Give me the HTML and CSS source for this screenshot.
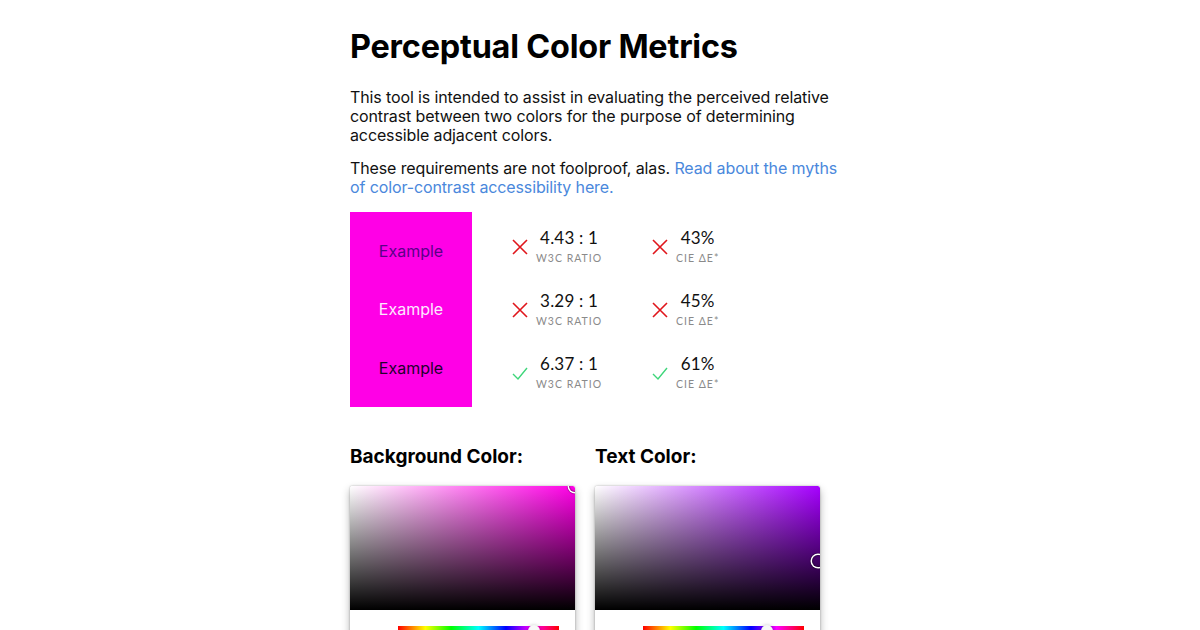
FILE: index.html
```html
<!DOCTYPE html>
<html lang="en">
<head>
<meta charset="utf-8">
<title>Perceptual Color Metrics</title>
<link rel="stylesheet" href="styles.css">
</head>
<body>
<main class="page">
  <h1 class="title">Perceptual Color Metrics</h1>
  <p class="lead">This tool is intended to assist in evaluating the perceived relative contrast between two colors for the purpose of determining accessible adjacent colors.</p>
  <p class="lead">These requirements are not foolproof, alas. <a class="link" href="#">Read about the myths of color-contrast accessibility here.</a></p>

  <section class="demo">
    <div class="examples">
      <div class="example ex-text">Example</div>
      <div class="example ex-white">Example</div>
      <div class="example ex-black">Example</div>
    </div>
    <div class="metrics">
      <div class="metric">
        <svg class="icon" viewBox="0 0 18 18"><path d="M2 2 L16 16 M16 2 L2 16" stroke="#e0161c" stroke-width="1.6" fill="none"/></svg>
        <div class="mbody"><div class="mval">4.43 : 1</div><div class="mlabel">W3C Ratio</div></div>
      </div>
      <div class="metric">
        <svg class="icon" viewBox="0 0 18 18"><path d="M2 2 L16 16 M16 2 L2 16" stroke="#e0161c" stroke-width="1.6" fill="none"/></svg>
        <div class="mbody"><div class="mval">43%</div><div class="mlabel">CIE ΔE*</div></div>
      </div>
      <div class="metric">
        <svg class="icon" viewBox="0 0 18 18"><path d="M2 2 L16 16 M16 2 L2 16" stroke="#e0161c" stroke-width="1.6" fill="none"/></svg>
        <div class="mbody"><div class="mval">3.29 : 1</div><div class="mlabel">W3C Ratio</div></div>
      </div>
      <div class="metric">
        <svg class="icon" viewBox="0 0 18 18"><path d="M2 2 L16 16 M16 2 L2 16" stroke="#e0161c" stroke-width="1.6" fill="none"/></svg>
        <div class="mbody"><div class="mval">45%</div><div class="mlabel">CIE ΔE*</div></div>
      </div>
      <div class="metric">
        <svg class="icon" viewBox="0 0 18 18"><path d="M2 10 L7 15 L16 4" stroke="#3ed67a" stroke-width="1.4" fill="none"/></svg>
        <div class="mbody"><div class="mval">6.37 : 1</div><div class="mlabel">W3C Ratio</div></div>
      </div>
      <div class="metric">
        <svg class="icon" viewBox="0 0 18 18"><path d="M2 10 L7 15 L16 4" stroke="#3ed67a" stroke-width="1.4" fill="none"/></svg>
        <div class="mbody"><div class="mval">61%</div><div class="mlabel">CIE ΔE*</div></div>
      </div>
    </div>
  </section>

  <section class="pickers">
    <div class="picker-col">
      <h2 class="picker-title">Background Color:</h2>
      <div class="picker">
        <div class="sat sat-bg">
          <div class="sat-pointer" style="left:100%;top:0%"></div>
        </div>
        <div class="picker-body">
          <div class="swatch-col"><div class="swatch swatch-bg"></div></div>
          <div class="hue"><div class="hue-thumb" style="left:84.4%"></div></div>
        </div>
      </div>
    </div>
    <div class="picker-col">
      <h2 class="picker-title">Text Color:</h2>
      <div class="picker">
        <div class="sat sat-text">
          <div class="sat-pointer" style="left:99%;top:60.5%"></div>
        </div>
        <div class="picker-body">
          <div class="swatch-col"><div class="swatch swatch-text"></div></div>
          <div class="hue"><div class="hue-thumb" style="left:77%"></div></div>
        </div>
      </div>
    </div>
  </section>
</main>
</body>
</html>
```

FILE: styles.css
```css
* { box-sizing: border-box; }
html, body { margin: 0; padding: 0; background: #fff; }
body {
  font-family: Inter, "Noto Sans", "Liberation Sans", sans-serif;
  color: #111;
}
.page {
  width: 500px;
  margin: 0 auto;
  padding-top: 27px;
}
.title {
  margin: 0 0 21px;
  font-size: 32.4px;
  line-height: 40px;
  font-weight: 700;
  color: #000;
  letter-spacing: -0.2px;
}
.lead {
  margin: 0 0 14px;
  font-size: 16px;
  line-height: 19px;
  letter-spacing: -0.12px;
}
.link { color: #4a88dc; text-decoration: none; }

.demo {
  display: flex;
  margin-top: 15px;
  height: 195px;
}
.examples {
  width: 122px;
  background: #ff00e6;
  padding: 10px 0;
  display: flex;
  flex-direction: column;
}
.example {
  flex: 1;
  display: flex;
  align-items: center;
  justify-content: center;
  font-size: 16px;
}
.ex-text { color: #5a0088; }
.ex-white { color: #fde8ff; }
.ex-black { color: #22002e; }

.metrics {
  display: grid;
  grid-template-columns: 140px 140px;
  grid-auto-rows: 63px;
  padding: 3px 0 3px 39px;
}
.metric {
  display: flex;
  align-items: center;
}
.icon { width: 18px; height: 18px; flex: none; }
.mbody {
  margin-left: 7px;
  display: flex;
  flex-direction: column;
  align-items: center;
  margin-top: -1px;
}
.mval {
  font-family: Lato, "Noto Sans", sans-serif;
  font-size: 17px;
  line-height: 20px;
  color: #111;
  letter-spacing: 0.2px;
}
.mlabel {
  font-family: Lato, "Noto Sans", sans-serif;
  font-size: 10.5px;
  line-height: 14px;
  text-transform: uppercase;
  letter-spacing: 1px;
  color: #8a8a8a;
  margin-top: 3px;
}

.pickers {
  display: flex;
  gap: 20px;
  margin-top: 38px;
}
.picker-col { width: 225px; }
.picker-title {
  margin: 0 0 17px;
  font-size: 19px;
  line-height: 24px;
  font-weight: 700;
  color: #000;
}
.picker {
  width: 225px;
  background: #fff;
  border-radius: 2px;
  box-shadow: 0 0 2px rgba(0,0,0,0.3), 0 4px 8px rgba(0,0,0,0.3);
  overflow: hidden;
}
.sat {
  position: relative;
  height: 124px;
  border-radius: 2px 2px 0 0;
}
.sat-bg {
  background: linear-gradient(to top, #000, rgba(0,0,0,0)), linear-gradient(to right, #fff, #ff00e6);
}
.sat-text {
  background: linear-gradient(to top, #000, rgba(0,0,0,0)), linear-gradient(to right, #fff, #a600ff);
}
.sat-pointer {
  position: absolute;
  width: 12px;
  height: 12px;
  border-radius: 50%;
  transform: translate(-6px, -6px);
  box-shadow: 0 0 0 1.5px #fff, inset 0 0 1px 1px rgba(0,0,0,0.3), 0 0 1px 2px rgba(0,0,0,0.4);
}
.picker-body {
  display: flex;
  padding: 16px 16px 12px;
}
.swatch-col { width: 32px; flex: none; }
.swatch {
  width: 16px;
  height: 16px;
  border-radius: 8px;
  margin-top: 6px;
}
.swatch-bg { background: #ff00e6; }
.swatch-text { background: #4a0066; }
.hue {
  position: relative;
  flex: 1;
  height: 10px;
  background: linear-gradient(to right, #f00 0%, #ff0 17%, #0f0 33%, #0ff 50%, #00f 67%, #f0f 83%, #f00 100%);
}
.hue-thumb {
  position: absolute;
  top: -1px;
  width: 12px;
  height: 12px;
  border-radius: 6px;
  background: #f8f8f8;
  transform: translateX(-6px);
  box-shadow: 0 1px 4px rgba(0,0,0,0.37);
}
```
